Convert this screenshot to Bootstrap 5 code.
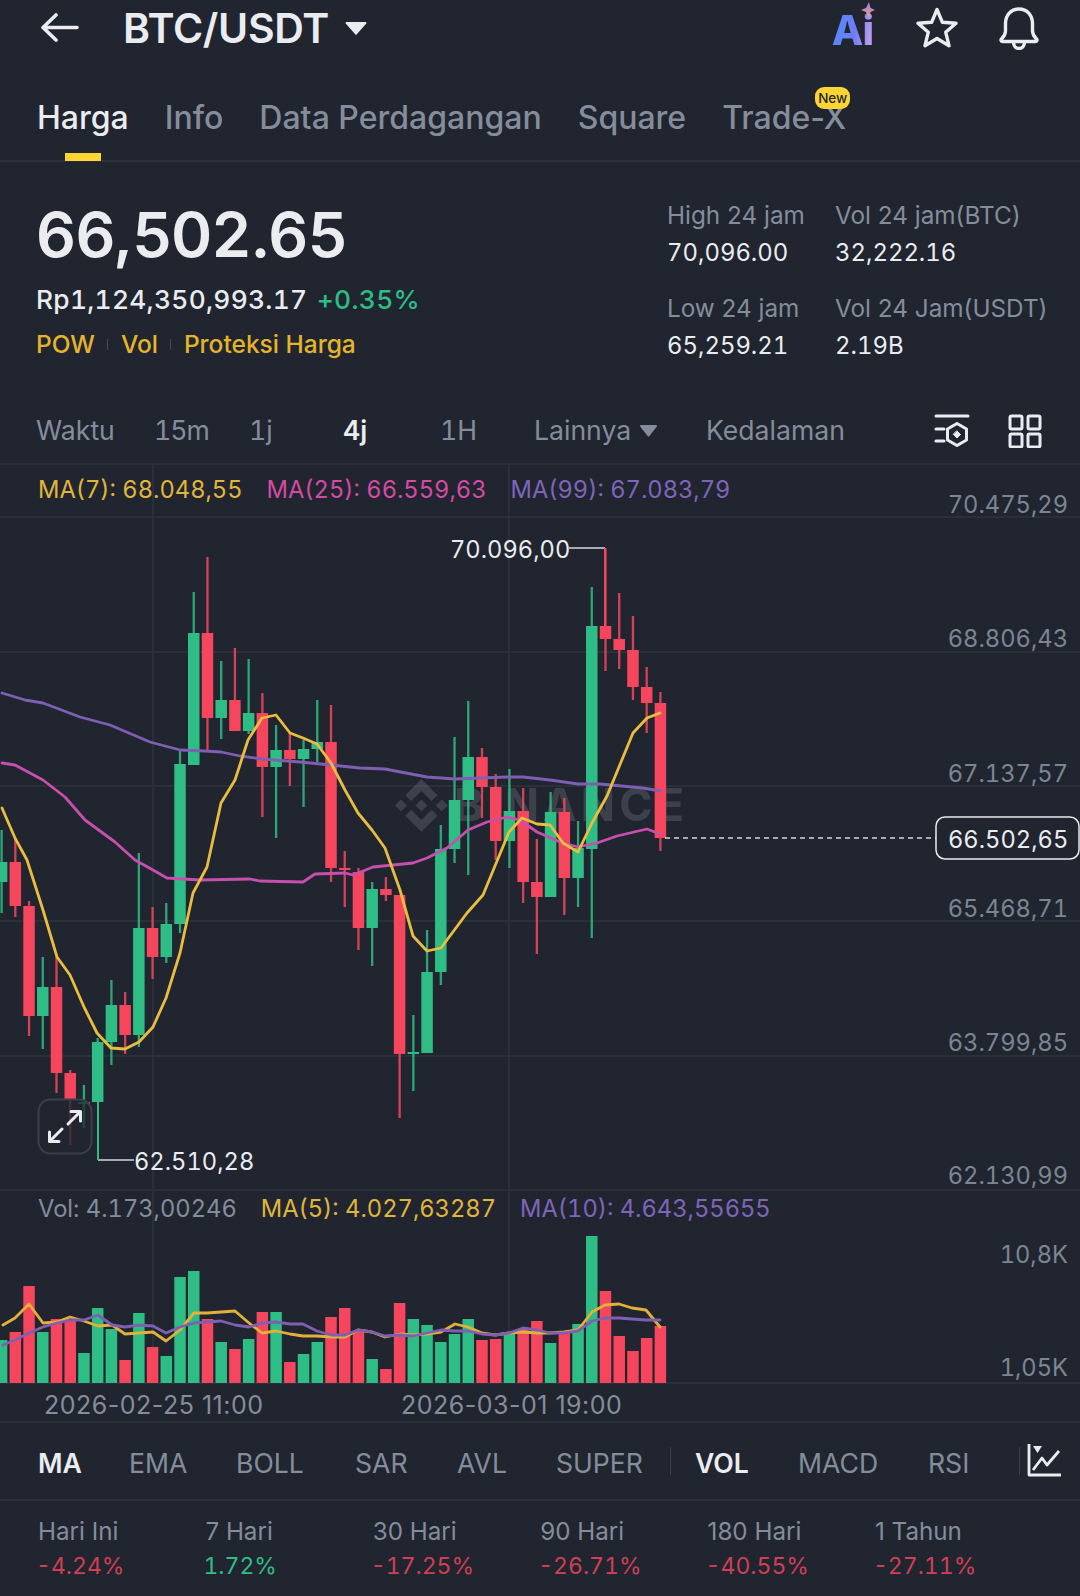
<!DOCTYPE html>
<html lang="id">

<head>
    <meta charset="UTF-8">
    <meta name="viewport" content="width=device-width, initial-scale=1.0">
    <title>BTC/USDT</title>
    <link href="https://cdn.jsdelivr.net/npm/bootstrap@5.3.3/dist/css/bootstrap.min.css" rel="stylesheet">
    <style>
        body {
            font-family: Inter, "Noto Sans", sans-serif;
            background-color: #202530;
            color: #eaecef;
            width: 1080px;
            height: 1596px;
            overflow: hidden;
        }

        .num-txt { font-variant-numeric: tabular-nums; }
        .muted-txt { color: #858d9b; }
        .white-txt { color: #eaecef; }
        .up-txt { color: #2ebd85; }
        .down-txt { color: #cf3f55; }

        .top-bar { height: 56px; padding-left: 41px; }
        .pair-name { font-size: 41px; font-weight: 600; line-height: 1; margin-left: 44px; letter-spacing: -.3px; }
        .ai-mark {
            font-size: 41px; font-weight: 800; line-height: 1; letter-spacing: -1px;
            background: linear-gradient(100deg, #4f8dff 0%, #6f7cf5 55%, #d4a6ec 100%);
            -webkit-background-clip: text; background-clip: text; color: transparent;
        }
        .ai-wrap { position: relative; margin-right: 43px; margin-top: 4px; }
        .ai-spark { position: absolute; right: -2px; top: -8px; }
        .star-icon { margin-right: 37px; }
        .bell-icon { margin: 0 40px 0 3px; }

        .tab-bar { height: 106px; padding: 40px 0 0 37px; gap: 36px; border-bottom: 2px solid #2b3039; font-size: 32px; font-weight: 500; }
        .tab-item { position: relative; line-height: 44px; }
        .tab-active::after {
            content: ""; position: absolute; left: 28px; width: 36px; height: 8px; top: 57px; background: #fcd535;
        }
        .new-tag {
            position: absolute; right: -4px; top: -9px; background: #fcd535; color: #202530;
            font-size: 13.5px; font-weight: 500; line-height: 22px; padding: 0 3px; border-radius: 9px;
        }

        .price-box { height: 238px; padding: 34px 0 0 36px; }
        .big-price { font-size: 62.5px; font-weight: 600; line-height: 76px; letter-spacing: -.4px; }
        .fiat-line { font-size: 26.3px; font-weight: 500; line-height: 34px; margin-top: 11px; letter-spacing: .3px; }
        .fiat-line .up-txt { margin-left: 2px; }
        .tag-line { font-size: 24.5px; font-weight: 500; color: #e4b52c; line-height: 34px; margin-top: 10px; gap: 26px; }
        .tag-line span + span { position: relative; }
        .tag-line span + span::before {
            content: ""; position: absolute; left: -14px; top: 12px; width: 1px; height: 11px; background: #454b56;
        }
        .stat-grid { width: 413px; font-size: 24.3px; line-height: 37px; margin-top: 1px; }
        .stat-col { width: 168px; }
        .stat-col + .stat-col { width: auto; }
        .stat-gap { margin-top: 19px; }
        .stat-val { font-size: 23.9px; }

        .tool-bar {
            display: grid; align-items: center; height: 65px; padding: 0 0 1px 36px;
            grid-template-columns: 118px 95px 94px 97px 94px 172px 227px 75px 40px;
            font-size: 26.6px; border-bottom: 2px solid #2b3039;
        }
        .tf-15m { letter-spacing: -1px; }
        .more-caret { margin-left: 9px; vertical-align: 3px; }

        .chart-box { position: relative; height: 956px; }
        .chart-svg { position: absolute; left: 0; top: 0; display: block; }
        .chart-svg text { font-family: Inter, "Noto Sans", sans-serif; }
        .plot-num { font-size: 23.7px; font-variant-numeric: tabular-nums; }
        .plot-date { font-size: 25px; letter-spacing: .5px; }
        .legend-row { position: absolute; left: 38px; font-size: 23.7px; line-height: 32px; gap: 24px; }
        .legend-price { top: 9px; }
        .legend-vol { top: 728px; }
        .ma-yellow { color: #e0b53c; }
        .ma-pink { color: #d54aa4; }
        .ma-purple { color: #7e65b9; }

        .ind-bar {
            display: grid; align-items: center; height: 80px; padding: 5px 0 0 38px;
            grid-template-columns: 91px 107px 119px 102px 99px 114px 25px 103px 130px 91px 7px 36px;
            border-top: 2px solid #2b3039; border-bottom: 2px solid #2b3039; font-size: 26.6px;
        }
        .ind-sep { width: 1px; height: 28px; background: #3a404b; margin-top: -5px; }
        .ind-icon { margin-top: -5px; }

        .perf-row { padding: 14px 0 0 38px; font-size: 24.2px; line-height: 34px; }
        .perf-cell { width: 167.4px; }
        .perf-val { font-size: 23px; font-variant-numeric: tabular-nums; margin-left: -2px; }
    </style>
</head>

<body>
    <div class="top-bar d-flex align-items-center">
        <svg width="38" height="30" viewBox="0 0 38 30" fill="none" stroke="#eaecef" stroke-width="3.6" stroke-linecap="round" stroke-linejoin="round">
            <path d="M36 14.5H2M15 2 2 14.5 15 27"/>
        </svg>
        <span class="pair-name">BTC/USDT</span>
        <svg class="ms-3" width="22" height="14" viewBox="0 0 22 14"><path d="M1.5 1h19a1 1 0 0 1 .8 1.6l-9.5 10.6a1 1 0 0 1-1.6 0L.7 2.600A1 1 0 0 1 1.500 1z" fill="#eaecef"/></svg>
        <div class="ms-auto d-flex align-items-center">
            <div class="ai-wrap">
                <span class="ai-mark">Ai</span>
                <svg class="ai-spark" width="14" height="16" viewBox="0 0 14 16"><defs><linearGradient id="spk" x1="0" y1="0" x2="0" y2="1"><stop offset="0" stop-color="#9a7cf0"/><stop offset="1" stop-color="#f3a27e"/></linearGradient></defs><path d="M8 0 9.500 6 14 8 9.500 10 8 16 5 10 0 8 5 6z" fill="url(#spk)"/></svg>
            </div>
            <svg class="star-icon" width="42" height="42" viewBox="0 0 42 42" fill="none" stroke="#eaecef" stroke-width="3.4" stroke-linejoin="round">
                <path d="M21 2.500 26.400 15.300 40 16.300 29.700 25.200 33 38.700 21 31.500 9 38.700 12.300 25.200 2 16.300 15.600 15.300z"/>
            </svg>
            <svg class="bell-icon" width="42" height="44" viewBox="0 0 42 44" fill="none" stroke="#eaecef" stroke-width="3.4" stroke-linecap="round" stroke-linejoin="round">
                <path d="M7.500 25V17.500C7.500 9 13 3 21 3s13.500 6 13.500 14.500V25c0 3 1.500 5.500 4 8 1 1 .3 2.500-1 2.500h-33c-1.300 0-2-1.500-1-2.500 2.500-2.500 4-5 4-8z"/>
                <path d="M15.500 36c0 4 2.500 6.500 5.500 6.500s5.500-2.500 5.500-6.500"/>
            </svg>
        </div>
    </div>

    <div class="tab-bar d-flex muted-txt">
        <div class="tab-item tab-active white-txt">Harga</div>
        <div class="tab-item">Info</div>
        <div class="tab-item">Data Perdagangan</div>
        <div class="tab-item">Square</div>
        <div class="tab-item">Trade-X<span class="new-tag">New</span></div>
    </div>

    <div class="price-box d-flex justify-content-between">
        <div>
            <div class="big-price">66,502.65</div>
            <div class="fiat-line num-txt">Rp1,124,350,993.17 <span class="up-txt">+0.35%</span></div>
            <div class="tag-line d-flex"><span>POW</span><span>Vol</span><span>Proteksi Harga</span></div>
        </div>
        <div class="stat-grid d-flex">
            <div class="stat-col">
                <div class="muted-txt">High 24 jam</div>
                <div class="stat-val num-txt">70,096.00</div>
                <div class="muted-txt stat-gap">Low 24 jam</div>
                <div class="stat-val num-txt">65,259.21</div>
            </div>
            <div class="stat-col">
                <div class="muted-txt">Vol 24 jam(BTC)</div>
                <div class="stat-val num-txt">32,222.16</div>
                <div class="muted-txt stat-gap">Vol 24 Jam(USDT)</div>
                <div class="stat-val num-txt">2.19B</div>
            </div>
        </div>
    </div>

    <div class="tool-bar muted-txt num-txt">
        <span>Waktu</span>
        <span class="tf-15m">15m</span>
        <span>1j</span>
        <span class="white-txt fw-semibold">4j</span>
        <span>1H</span>
        <span>Lainnya<svg class="more-caret" width="17" height="12" viewBox="0 0 17 12"><path d="M1 0h15a1 1 0 0 1 .700 1.700L9.200 11.300a1 1 0 0 1-1.400 0L.300 1.700A1 1 0 0 1 1 0z" fill="#858d9b"/></svg></span>
        <span>Kedalaman</span>
        <svg width="38" height="38" viewBox="0 0 38 38" fill="none" stroke="#eaecef" stroke-width="3" stroke-linecap="round" stroke-linejoin="round">
            <path d="M3 4h32M3 17h8M3 29h8"/>
            <path d="M24 11.500 33.500 17v11L24 33.500 14.500 28V17z"/>
            <path d="M24 19l3.500 3.500L24 26l-3.500-3.500z" fill="#eaecef" stroke-width="1"/>
        </svg>
        <svg width="34" height="34" viewBox="0 0 34 34" fill="none" stroke="#eaecef" stroke-width="3" stroke-linejoin="round">
            <rect x="2" y="2" width="12" height="13" rx="1.500"/>
            <rect x="20" y="2" width="12" height="13" rx="1.500"/>
            <rect x="2" y="20" width="12" height="13" rx="1.500"/>
            <rect x="20" y="20" width="12" height="13" rx="1.500"/>
        </svg>
    </div>

    <div class="chart-box">
        <svg class="chart-svg" id="chart" width="1080" height="956" viewBox="0 465 1080 956">
            <g stroke="#2e333e" stroke-width="1.500">
                <path d="M0 517H1080M0 652H1080M0 786H1080M0 921H1080M0 1056H1080M0 1190H1080M0 1383H1080"/>
                <path d="M153 465V1383M509 465V1383"/>
            </g>
            <!-- watermark -->
            <g fill="#fff" opacity=".13">
                <path transform="translate(395 779) scale(1.650)" d="M9.800 13.400 16 7.200l6.200 6.200 3.600-3.600L16 0 6.200 9.800l3.600 3.600zM0 16l3.600-3.600L7.200 16l-3.600 3.600L0 16zm9.800 2.600L16 24.800l6.200-6.200 3.600 3.600L16 32l-9.800-9.800 3.600-3.600zM24.800 16l3.600-3.600L32 16l-3.600 3.600L24.800 16zM19.600 16 16 12.400 12.400 16l3.600 3.600 3.600-3.600z"/>
                <text x="454" y="821" font-size="45" font-weight="700" textLength="230">BINANCE</text>
            </g>
            <g id="vols"></g>
            <g id="candles"></g>
            <g id="lines" fill="none" stroke-linejoin="round" stroke-linecap="round"></g>

            <!-- hi/lo markers -->
            <path d="M569 548H605M98 1160H134" stroke="#d5d8dd" stroke-width="1.500" fill="none"/>
            <path d="M98 1102V1160" stroke="#2ebd85" stroke-width="2"/>
            <path d="M605 548V626" stroke="#f6465d" stroke-width="2"/>
            <g class="plot-num" fill="#eaecef">
                <text x="450" y="558">70.096,00</text>
                <text x="134" y="1170">62.510,28</text>
            </g>

            <!-- last price -->
            <path d="M665 838H936" stroke="#d5d8dd" stroke-width="1.500" stroke-dasharray="5 4"/>
            <rect x="936" y="817" width="143" height="42" rx="9" fill="#202530" stroke="#eaecef" stroke-width="1.500"/>
            <text class="plot-num" x="948" y="848" fill="#eaecef">66.502,65</text>

            <g class="plot-num" fill="#7d8593" text-anchor="end">
                <text x="1068" y="513">70.475,29</text>
                <text x="1068" y="647">68.806,43</text>
                <text x="1068" y="782">67.137,57</text>
                <text x="1068" y="917">65.468,71</text>
                <text x="1068" y="1051">63.799,85</text>
                <text x="1068" y="1184">62.130,99</text>
                <text x="1068" y="1263">10,8K</text>
                <text x="1068" y="1376">1,05K</text>
            </g>
            <g class="plot-date" fill="#858d9b">
                <text x="44" y="1414">2026-02-25 11:00</text>
                <text x="401" y="1414">2026-03-01 19:00</text>
            </g>

            <!-- expand button -->
            <rect x="38.500" y="1099.500" width="53" height="54" rx="12" fill="#202530" fill-opacity=".75" stroke="#3a404b" stroke-width="2"/>
            <g fill="none" stroke="#eaecef" stroke-width="3" stroke-linecap="round" stroke-linejoin="round">
                <path d="M68 1124 80 1112M71 1111.500H80.500V1121"/>
                <path d="M62 1129 50 1141M49.500 1132V1141.500H59"/>
            </g>
        </svg>

        <div class="legend-row legend-price d-flex num-txt">
            <span class="ma-yellow">MA(7): 68.048,55</span>
            <span class="ma-pink">MA(25): 66.559,63</span>
            <span class="ma-purple">MA(99): 67.083,79</span>
        </div>
        <div class="legend-row legend-vol d-flex num-txt">
            <span class="muted-txt">Vol: 4.173,00246</span>
            <span class="ma-yellow">MA(5): 4.027,63287</span>
            <span class="ma-purple">MA(10): 4.643,55655</span>
        </div>
    </div>

    <div class="ind-bar muted-txt">
        <span class="white-txt fw-semibold">MA</span>
        <span>EMA</span>
        <span>BOLL</span>
        <span>SAR</span>
        <span>AVL</span>
        <span>SUPER</span>
        <span class="ind-sep"></span>
        <span class="white-txt fw-semibold">VOL</span>
        <span>MACD</span>
        <span>RSI</span>
        <span class="ind-sep"></span>
        <svg class="ind-icon" width="36" height="36" viewBox="0 0 36 36" fill="none" stroke="#eaecef" stroke-width="2.800" stroke-linejoin="round">
            <path d="M3 1V32H35"/>
            <path d="M7 27 16 15 21 22 33 8"/>
            <path d="M7 3h9l-4.500 7z" fill="#eaecef" stroke="none"/>
        </svg>
    </div>

    <div class="perf-row d-flex">
        <div class="perf-cell"><div class="muted-txt">Hari Ini</div><div class="perf-val down-txt">-4.24%</div></div>
        <div class="perf-cell"><div class="muted-txt">7 Hari</div><div class="perf-val up-txt">1.72%</div></div>
        <div class="perf-cell"><div class="muted-txt">30 Hari</div><div class="perf-val down-txt">-17.25%</div></div>
        <div class="perf-cell"><div class="muted-txt">90 Hari</div><div class="perf-val down-txt">-26.71%</div></div>
        <div class="perf-cell"><div class="muted-txt">180 Hari</div><div class="perf-val down-txt">-40.55%</div></div>
        <div class="perf-cell"><div class="muted-txt">1 Tahun</div><div class="perf-val down-txt">-27.11%</div></div>
    </div>

    <script src="https://cdn.jsdelivr.net/npm/bootstrap@5.3.3/dist/js/bootstrap.bundle.min.js"></script>
    <script>
        const NS = 'http://www.w3.org/2000/svg';
        const GREEN = '#2ebd85';
        const RED = '#f6465d';

        // wick top, body top, body bottom, wick bottom, green(1)/red(0), volume top
        const candles = [
            [830, 862, 882, 913, 1, 1340], [838, 862, 906, 917, 0, 1332], [901, 906, 1016, 1036, 0, 1286],
            [957, 987, 1016, 1049, 1, 1332], [957, 987, 1073, 1093, 0, 1319], [1070, 1073, 1099, 1145, 0, 1319],
            [1085, 1102, 1104, 1128, 1, 1353], [1038, 1042, 1102, 1102, 1, 1308], [980, 1005, 1042, 1065, 1, 1329],
            [992, 1005, 1035, 1054, 0, 1360], [853, 928, 1035, 1047, 1, 1313], [907, 928, 957, 979, 0, 1347],
            [903, 924, 957, 963, 1, 1356], [751, 764, 924, 933, 1, 1277], [592, 633, 765, 765, 1, 1271],
            [557, 633, 718, 750, 0, 1319], [661, 700, 718, 739, 1, 1342], [648, 700, 731, 731, 0, 1349],
            [659, 713, 731, 734, 1, 1339], [693, 713, 767, 817, 0, 1312], [725, 750, 767, 838, 1, 1312],
            [733, 750, 759, 786, 0, 1362], [740, 749, 759, 807, 1, 1354], [700, 742, 749, 762, 1, 1342],
            [705, 742, 868, 882, 0, 1317], [851, 868, 870, 907, 0, 1308], [868, 872, 928, 950, 0, 1331],
            [882, 889, 928, 966, 1, 1359], [877, 889, 895, 901, 0, 1369], [895, 895, 1054, 1118, 0, 1303],
            [1015, 1052, 1054, 1091, 1, 1319], [930, 972, 1053, 1053, 1, 1325], [825, 849, 972, 985, 1, 1342],
            [737, 800, 849, 863, 1, 1334], [701, 757, 800, 875, 1, 1319], [748, 757, 787, 818, 0, 1340],
            [774, 787, 841, 860, 0, 1339], [769, 811, 841, 868, 1, 1334], [788, 811, 882, 903, 0, 1329],
            [839, 882, 897, 954, 0, 1321], [792, 812, 897, 897, 1, 1343], [798, 812, 878, 915, 0, 1333],
            [821, 848, 878, 907, 1, 1324], [587, 626, 849, 938, 1, 1236], [548, 626, 639, 671, 0, 1291],
            [593, 639, 650, 669, 0, 1336], [616, 650, 687, 700, 0, 1351], [667, 687, 703, 733, 0, 1338],
            [692, 703, 838, 851, 0, 1326]
        ];

        const ma99 = [[2,693],[25,700],[43,703],[80,717],[110,725],[150,742],[180,750],[205,751],[221,752],[240,756],[262,759],[300,762],[331,765],[360,768],[385,769],[427,777],[455,779],[507,777],[523,777],[550,780],[578,784],[600,784],[643,788],[660,791]];
        const ma25 = [[2,763],[15,765],[43,780],[65,797],[85,820],[115,842],[135,860],[153,870],[167,878],[200,880],[250,879],[260,881],[303,882],[315,874],[345,873],[353,875],[373,867],[393,865],[413,863],[427,858],[447,848],[468,830],[487,822],[507,817],[520,820],[537,832],[560,842],[578,847],[597,843],[617,836],[647,829],[660,834]];
        const ma7 = [[2,808],[15,838],[27,860],[43,910],[57,957],[70,975],[84,1007],[97,1033],[111,1048],[125,1049],[139,1042],[153,1027],[166,998],[180,953],[193,893],[207,867],[221,803],[235,780],[248,740],[262,718],[276,715],[290,733],[303,738],[317,744],[331,763],[345,790],[358,813],[372,830],[385,848],[400,890],[413,936],[427,951],[441,948],[467,913],[483,895],[509,832],[522,818],[537,824],[550,825],[563,843],[578,852],[592,823],[607,796],[633,733],[647,718],[660,713]];
        const volMa5 = [[3,1325],[15,1318],[29,1304],[43,1323],[57,1322],[70,1317],[84,1321],[98,1326],[112,1325],[125,1334],[139,1333],[153,1332],[166,1341],[180,1330],[194,1313],[207,1313],[221,1312],[235,1311],[249,1323],[262,1333],[276,1331],[290,1334],[303,1336],[317,1336],[331,1337],[345,1337],[358,1330],[372,1332],[385,1337],[400,1334],[413,1335],[427,1334],[441,1332],[455,1324],[468,1327],[482,1333],[495,1335],[509,1333],[523,1332],[537,1333],[550,1333],[564,1332],[578,1330],[592,1312],[605,1305],[619,1304],[632,1308],[646,1310],[660,1327]];
        const volMa10 = [[3,1345],[15,1340],[29,1333],[43,1327],[57,1323],[70,1320],[84,1320],[98,1315],[112,1325],[125,1327],[139,1325],[153,1326],[166,1333],[180,1327],[194,1323],[207,1322],[221,1321],[235,1325],[249,1327],[262,1323],[276,1322],[290,1324],[303,1324],[317,1331],[331,1335],[345,1335],[358,1330],[372,1332],[385,1336],[400,1335],[413,1336],[427,1333],[441,1330],[455,1331],[468,1331],[482,1334],[495,1335],[509,1333],[523,1328],[537,1330],[550,1333],[564,1333],[578,1331],[592,1321],[605,1318],[619,1318],[632,1319],[646,1320],[660,1320]];

        function addEl(parent, tag, attrs) {
            const el = document.createElementNS(NS, tag);
            for (const k in attrs) el.setAttribute(k, attrs[k]);
            parent.appendChild(el);
        }

        function addLine(pts, color, width) {
            addEl(document.getElementById('lines'), 'polyline', {
                points: pts.map(p => p.join(',')).join(' '),
                stroke: color,
                'stroke-width': width
            });
        }

        candles.forEach((c, i) => {
            const x = 1.6 + i * 13.725;
            const color = c[4] ? GREEN : RED;
            const g = document.getElementById('candles');
            addEl(g, 'rect', { x: x - 1.15, y: c[0], width: 2.3, height: c[3] - c[0], fill: color, opacity: .85 });
            addEl(g, 'rect', { x: x - 5.75, y: c[1], width: 11.5, height: c[2] - c[1], fill: color });
            addEl(document.getElementById('vols'), 'rect', { x: x - 5.75, y: c[5], width: 11.5, height: 1383 - c[5], fill: color });
        });

        addLine(ma99, '#7e5fb2', 2.8);
        addLine(ma25, '#c74fae', 2.8);
        addLine(ma7, '#e9bd3f', 2.8);
        addLine(volMa5, '#e3b13a', 2.8);
        addLine(volMa10, '#7e5fb2', 2.8);
    </script>
</body>

</html>
